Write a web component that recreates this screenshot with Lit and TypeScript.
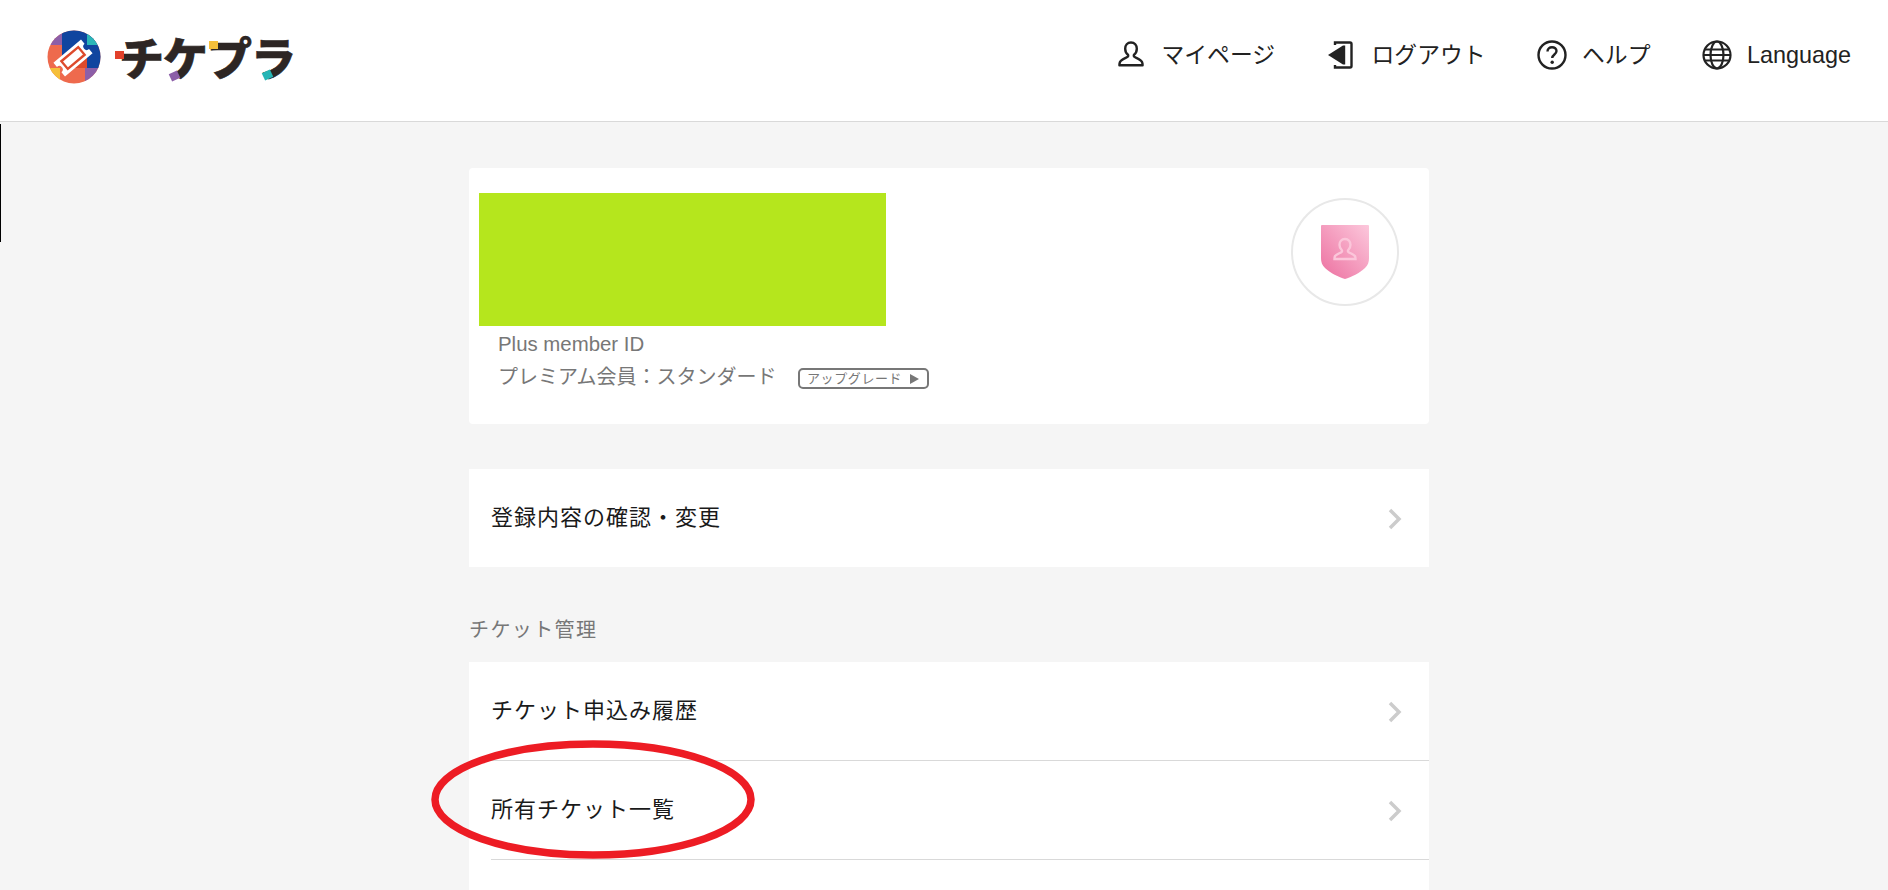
import { LitElement, html, css, svg } from "lit";
import { customElement } from "lit/decorators.js";

const person = svg`<path d="M13 2.500c-3.600 0-5.800 2.700-5.800 6.200 0 2.600 1 4.600 2.700 6 .5.500.4 1.600-.3 2.100-2 1.200-6.600 2.700-7.600 5.200-.5 1.200-.6 2.400-.6 3.300h23.200c0-.9-.1-2.100-.6-3.300-1-2.500-5.600-4-7.600-5.200-.7-.5-.8-1.600-.3-2.100 1.700-1.400 2.700-3.400 2.700-6 0-3.500-2.200-6.200-5.800-6.200z" fill="none" stroke="currentColor" stroke-width="2.400" stroke-linejoin="round"/>`;

@customElement("app-root")
export class AppRoot extends LitElement {
  static styles = css`
    :host {
      display: block;
      position: relative;
      height: 890px;
      overflow: hidden;
      background: #f5f5f5;
      font-family: "Liberation Sans", "Noto Sans CJK JP", sans-serif;
      color: #222;
    }
    .edge {
      position: absolute;
      left: 0;
      top: 124px;
      width: 1px;
      height: 118px;
      background: #000;
    }
    header {
      height: 121px;
      background: #fff;
      border-bottom: 1px solid #d9d9d9;
      display: flex;
      align-items: center;
      justify-content: space-between;
      padding: 0 37px 0 47px;
    }
    .logo {
      position: relative;
      display: flex;
      align-items: center;
      gap: 18px;
      margin-top: -8px;
    }
    .wordmark {
      font-family: "Noto Sans CJK JP", sans-serif;
      font-weight: 900;
      font-size: 45px;
      line-height: 53px;
      letter-spacing: -1px;
      color: #2d2624;
      -webkit-text-stroke: 0.6px #2d2624;
    }
    .tick {
      position: absolute;
      width: 9px;
      height: 8px;
    }
    .tick.red { left: 68px; top: 21px; background: #e2412b; }
    .tick.purple { left: 123px; top: 42px; background: #8c5fa8; transform: rotate(-25deg); }
    .tick.yellow { left: 162px; top: 11px; background: #f5bf3a; }
    .tick.teal { left: 216px; top: 41px; background: #26b5b5; transform: rotate(-25deg); }
    nav {
      display: flex;
      align-items: center;
      margin-top: -11px;
    }
    .nav-item {
      display: flex;
      align-items: center;
      gap: 15px;
      font-size: 22.800px;
      line-height: 30px;
      margin-left: 51.500px;
    }
    .nav-item.latin {
      font-size: 23.400px;
    }
    .nav-item svg {
      width: 30px;
      height: 30px;
      display: block;
      flex: none;
    }
    main {
      width: 960px;
      margin: 46px auto 0;
      transform: translateX(5px);
    }
    .profile {
      height: 256px;
      box-sizing: border-box;
      background: #fff;
      border-radius: 4px;
      padding: 25px 10px 0;
      display: flex;
      justify-content: space-between;
      color: #777;
    }
    .redacted {
      width: 407px;
      height: 133px;
      background: #b5e61d;
    }
    .member {
      padding-left: 19px;
      margin-top: 5px;
      font-size: 20px;
      line-height: 26px;
    }
    .member-id {
      font-size: 20.400px;
    }
    .rank {
      display: flex;
      align-items: center;
      margin-top: 7px;
    }
    .upgrade {
      margin-left: 21px;
      margin-top: 3px;
      box-sizing: border-box;
      width: 131px;
      height: 21px;
      border: 2px solid #777;
      border-radius: 5px;
      display: flex;
      align-items: center;
      justify-content: center;
      gap: 8px;
      font-size: 13px;
      line-height: 17px;
      letter-spacing: 0.600px;
      color: #777;
    }
    .upgrade svg {
      width: 9px;
      height: 10px;
      display: block;
    }
    .badge {
      width: 108px;
      height: 108px;
      box-sizing: border-box;
      margin: 5px 20px 0 0;
      border: 2px solid #e8e8e8;
      border-radius: 50%;
      display: flex;
      align-items: center;
      justify-content: center;
    }
    .badge svg {
      width: 48px;
      height: 54px;
      display: block;
    }
    .list {
      background: #fff;
      margin-top: 45px;
    }
    .row {
      height: 98px;
      margin-left: 22px;
      padding-right: 26px;
      display: flex;
      align-items: center;
      justify-content: space-between;
      font-size: 22px;
      letter-spacing: 1px;
      color: #1a1a1a;
      border-bottom: 1px solid #d9d9d9;
    }
    .row:last-child {
      border-bottom: 0;
    }
    .row span {
      margin-bottom: 6px;
    }
    .row svg {
      width: 16px;
      height: 24px;
      display: block;
      margin-top: 2px;
    }
    h2 {
      margin: 48px 0 0;
      font-size: 20px;
      line-height: 30px;
      font-weight: 400;
      letter-spacing: 1.400px;
      color: #777;
    }
    h2 + .list {
      margin-top: 17px;
    }
    .ring {
      position: absolute;
      left: 428px;
      top: 737px;
      width: 330px;
      height: 125px;
      pointer-events: none;
    }
  `;

  private row(label: string) {
    return html`<div class="row">
      <span>${label}</span>
      <svg viewBox="0 0 16 24"><path d="M3 3l9 9-9 9" fill="none" stroke="#ccc" stroke-width="3.500"/></svg>
    </div>`;
  }

  render() {
    return html`
      <div class="edge"></div>
      <header>
        <div class="logo">
          <svg width="54" height="54" viewBox="0 0 54 54">
            <defs><clipPath id="disc"><circle cx="27" cy="27" r="26.500"/></clipPath></defs>
            <g clip-path="url(#disc)">
              <rect width="54" height="54" fill="#ee6a4d"/>
              <rect x="15" y="0" width="39" height="38" fill="#10459f"/>
              <rect x="0" y="0" width="15" height="15" fill="#8c5fa8"/>
              <rect x="40" y="0" width="14" height="15" fill="#2bb6b8"/>
              <rect x="38" y="38" width="16" height="16" fill="#8c5fa8"/>
              <rect x="2" y="38" width="11" height="16" fill="#f5bf3a"/>
              <rect x="18" y="28" width="22" height="10" fill="#dd4a2c"/>
            </g>
            <g transform="rotate(-40 26 28)">
              <path d="M8 19h36v5.500a3.500 3.500 0 000 7V37H8v-5.500a3.500 3.500 0 000-7z" fill="#fff"/>
              <rect x="15" y="23" width="22" height="10" fill="#fff" stroke="#dd4a2c" stroke-width="2.400"/>
            </g>
          </svg>
          <span class="wordmark">チケプラ</span>
          <i class="tick red"></i><i class="tick purple"></i><i class="tick yellow"></i><i class="tick teal"></i>
        </div>
        <nav>
          <div class="nav-item">
            <svg viewBox="0 0 28 30">${person}</svg>
            マイページ
          </div>
          <div class="nav-item">
            <svg viewBox="0 0 30 30">
              <path d="M8 5V2.500h15a1.500 1.500 0 011.500 1.500v22a1.500 1.500 0 01-1.500 1.500H8V25" fill="none" stroke="currentColor" stroke-width="2.400"/>
              <path d="M1 15l15-9.500v19z" fill="currentColor"/>
              <rect x="16" y="5.500" width="2.200" height="19" fill="currentColor"/>
            </svg>
            ログアウト
          </div>
          <div class="nav-item">
            <svg viewBox="0 0 30 30">
              <circle cx="15" cy="15" r="13.500" fill="none" stroke="currentColor" stroke-width="2.400"/>
              <path d="M10.500 11.500c0-2.800 2-4.300 4.500-4.300s4.500 1.600 4.500 3.900c0 3.400-4.300 3.400-4.300 7" fill="none" stroke="currentColor" stroke-width="2.400"/>
              <circle cx="15.200" cy="22.300" r="1.700" fill="currentColor"/>
            </svg>
            ヘルプ
          </div>
          <div class="nav-item latin">
            <svg viewBox="0 0 30 30" fill="none" stroke="currentColor" stroke-width="2.200">
              <circle cx="15" cy="15" r="13.500"/>
              <ellipse cx="15" cy="15" rx="6.500" ry="13.500"/>
              <path d="M3 9.500h24M3 20.500h24M1.500 15h27"/>
            </svg>
            Language
          </div>
        </nav>
      </header>
      <main>
        <section class="profile">
          <div>
            <div class="redacted"></div>
            <div class="member">
              <div class="member-id">Plus member ID</div>
              <div class="rank">
                <span>プレミアム会員：スタンダード</span>
                <span class="upgrade">アップグレード<svg viewBox="0 0 9 10"><path d="M0 0l9 5-9 5z" fill="#777"/></svg></span>
              </div>
            </div>
          </div>
          <div class="badge">
            <svg viewBox="0 0 48 54">
              <defs>
                <linearGradient id="shield" x1="0" y1="1" x2="1" y2="0">
                  <stop offset="0" stop-color="#ec6f9f"/>
                  <stop offset="1" stop-color="#fcc8dc"/>
                </linearGradient>
              </defs>
              <path d="M0 1a1 1 0 011-1h46a1 1 0 011 1v32c0 4-1 7-4 10-5 5-14 9-20 11-6-2-15-6-20-11-3-3-4-6-4-10z" fill="url(#shield)"/>
              <path d="M24 14c-3.500 0-5.500 2.600-5.500 5.800 0 2.400 1 4 2.200 5.200.6.700.4 1.700-.4 2.200-2 1.200-5.300 2.400-6.300 4-.5.900-.5 1.800-.5 2.800h21c0-1 0-1.900-.5-2.800-1-1.600-4.300-2.800-6.300-4-.8-.5-1-1.500-.4-2.200 1.200-1.200 2.200-2.800 2.200-5.200 0-3.200-2-5.800-5.500-5.800z" fill="none" stroke="#fbc6da" stroke-width="2.400"/>
            </svg>
          </div>
        </section>
        <section class="list">${this.row("登録内容の確認・変更")}</section>
        <h2>チケット管理</h2>
        <section class="list">
          ${this.row("チケット申込み履歴")}
          ${this.row("所有チケット一覧")}
          ${this.row("")}
        </section>
      </main>
      <svg class="ring" viewBox="0 0 330 125">
        <ellipse cx="165" cy="62.500" rx="158" ry="55.500" fill="none" stroke="#ed1c24" stroke-width="7.500"/>
      </svg>
    `;
  }
}
